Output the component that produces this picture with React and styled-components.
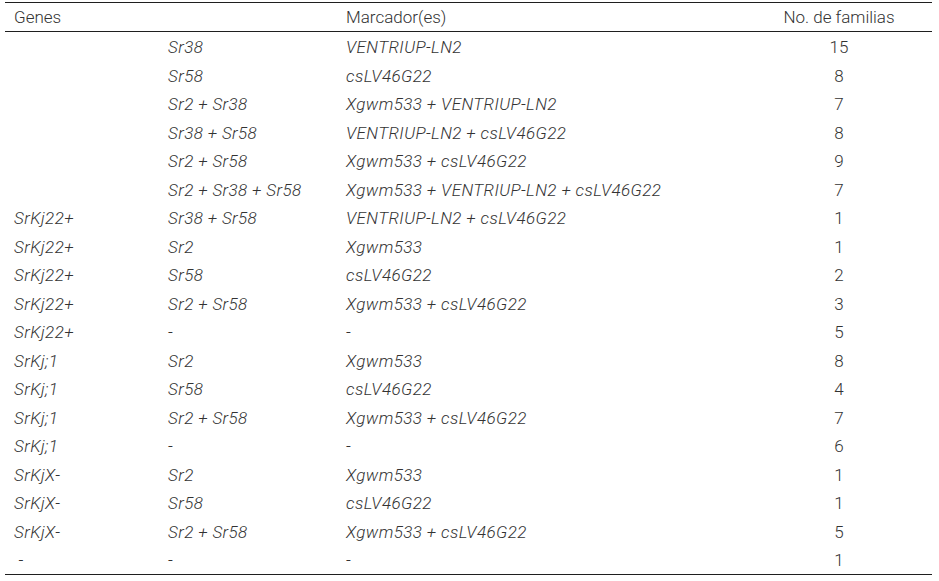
import React from 'react';
import styled, { createGlobalStyle } from 'styled-components';

const GlobalStyle = createGlobalStyle`
  body {
    margin: 0;
    background: #ffffff;
    font-family: Roboto, "Liberation Sans", sans-serif;
    font-weight: 300;
    color: #333333;
  }
`

const Page = styled.div`
  padding: 2px 0 0 5px;
  width: 927px;
`

const Table = styled.div`
  border-top: 1px solid #1f1f1f;
  border-bottom: 1.5px solid #1f1f1f;
`

// columnas de la tabla
const Row = styled.div`
  display: grid;
  grid-template-columns: 163px 178px 400px 1fr;
  align-items: center;
  height: ${({ $head }) => ($head ? '29px' : '28.5px')};
  padding-top: ${({ $head }) => ($head ? '0' : '2px')};
  box-sizing: border-box;
  border-bottom: ${({ $head }) => ($head ? '1.5px solid #1f1f1f' : 'none')};
  font-size: 17px;
  line-height: 20px;
`

const Cell = styled.div`
  white-space: pre;
  font-style: ${({ $italic }) => ($italic ? 'italic' : 'normal')};
  letter-spacing: ${({ $italic }) => ($italic ? '0.4px' : '0')};
  padding-left: ${({ $first }) => ($first ? '9px' : '0')};
  text-align: ${({ $center }) => ($center ? 'center' : 'left')};
`

const rows = [
  ['', 'Sr38', 'VENTRIUP-LN2', '15'],
  ['', 'Sr58', 'csLV46G22', '8'],
  ['', 'Sr2 + Sr38', 'Xgwm533 + VENTRIUP-LN2', '7'],
  ['', 'Sr38 + Sr58', 'VENTRIUP-LN2 + csLV46G22', '8'],
  ['', 'Sr2 + Sr58', 'Xgwm533 + csLV46G22', '9'],
  ['', 'Sr2 + Sr38 + Sr58', 'Xgwm533 + VENTRIUP-LN2 + csLV46G22', '7'],
  ['SrKj22+', 'Sr38 + Sr58', 'VENTRIUP-LN2 + csLV46G22', '1'],
  ['SrKj22+', 'Sr2', 'Xgwm533', '1'],
  ['SrKj22+', 'Sr58', 'csLV46G22', '2'],
  ['SrKj22+', 'Sr2 + Sr58', 'Xgwm533 + csLV46G22', '3'],
  ['SrKj22+', '-', '-', '5'],
  ['SrKj;1', 'Sr2', 'Xgwm533', '8'],
  ['SrKj;1', 'Sr58', 'csLV46G22', '4'],
  ['SrKj;1', 'Sr2 + Sr58', 'Xgwm533 + csLV46G22', '7'],
  ['SrKj;1', '-', '-', '6'],
  ['SrKjX-', 'Sr2', 'Xgwm533', '1'],
  ['SrKjX-', 'Sr58', 'csLV46G22', '1'],
  ['SrKjX-', 'Sr2 + Sr58', 'Xgwm533 + csLV46G22', '5'],
  [' -', '-', '-', '1'],
]

function App() {
  return (
    <Page>
      <GlobalStyle />
      <Table>
        <Row $head>
          <Cell $first>Genes</Cell>
          <Cell></Cell>
          <Cell>Marcador(es)</Cell>
          <Cell $center>No. de familias</Cell>
        </Row>
        {rows.map((r, i) => (
          <Row key={i}>
            <Cell $first $italic>{r[0]}</Cell>
            <Cell $italic>{r[1]}</Cell>
            <Cell $italic>{r[2]}</Cell>
            <Cell $center>{r[3]}</Cell>
          </Row>
        ))}
      </Table>
    </Page>
  )
}

export default App;
